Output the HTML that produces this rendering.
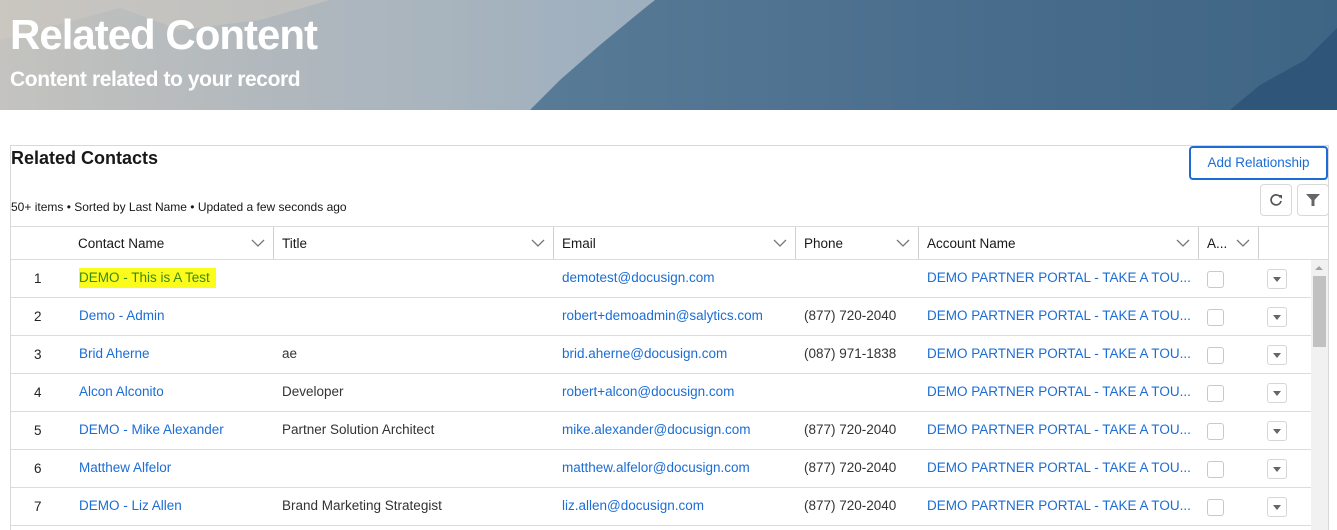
<!DOCTYPE html>
<html><head><meta charset="utf-8"><style>
*{margin:0;padding:0;box-sizing:border-box}
html,body{width:1337px;height:530px;overflow:hidden}
body{background:#fff;font-family:"Liberation Sans",Arial,sans-serif;position:relative}
.banner{position:absolute;left:0;top:0;width:1337px;height:110px;overflow:hidden}
.banner h1{position:absolute;left:10px;top:11px;color:#fff;font-size:42px;font-weight:bold;letter-spacing:-1px}
.banner h2{position:absolute;left:10px;top:68px;color:#fff;font-size:21px;font-weight:bold;letter-spacing:-0.4px}
.panel{position:absolute;left:10px;top:145px;width:1319px;height:385px;border:1px solid #d8d8d8;border-bottom:none}
.t{position:absolute;font-size:13.5px;white-space:nowrap}
.link{color:#1b6dd5}
.hd{position:absolute;top:227px;height:33px;border-left:1px solid #d0d0d0;font-size:13.5px;color:#181818}
.hd span{position:absolute;left:8px;top:9px}
.chev{position:absolute;right:8px;top:11px;width:14px;height:10px}
.row{position:absolute;left:11px;width:1300px;height:1px;background:#dcdcdc}
.cb{position:absolute;left:1207px;width:17px;height:17px;border:1px solid #c9c9c9;border-radius:3px;background:#fff}
.act{position:absolute;left:1267px;width:20px;height:20px;border:1px solid #d6d6d6;border-radius:3px;background:#fff}
.act:after{content:"";position:absolute;left:5px;top:7px;border-left:4.5px solid transparent;border-right:4.5px solid transparent;border-top:5px solid #666}
</style></head><body>
<div class="banner">
<svg width="1337" height="110" style="position:absolute;left:0;top:0">
<defs>
<linearGradient id="g1" x1="0" x2="1" y1="0" y2="0">
<stop offset="0" stop-color="#c4c3bf"/><stop offset="0.18" stop-color="#b3b9bd"/><stop offset="0.45" stop-color="#9fb0bf"/><stop offset="1" stop-color="#8ea4b6"/></linearGradient>
<linearGradient id="g2" x1="0" x2="1" y1="0" y2="0">
<stop offset="0" stop-color="#587b97"/><stop offset="0.5" stop-color="#4a6e8d"/><stop offset="1" stop-color="#3f6585"/></linearGradient>
</defs>
<rect width="1337" height="110" fill="url(#g1)"/>
<path d="M0 40 L120 8 L180 30 L260 20 L330 0 L0 0Z" fill="#cfcac2" opacity="0.5"/>
<path d="M530 110 L560 80 L600 45 L640 12 L655 0 L1337 0 L1337 110Z" fill="url(#g2)"/>
<path d="M1230 110 L1260 85 L1305 60 L1337 28 L1337 110Z" fill="#2f5679"/>
</svg>
<h1>Related Content</h1>
<h2>Content related to your record</h2>
</div>
<div class="panel"></div>
<div class="t" style="left:11px;top:148px;font-size:18px;font-weight:bold;color:#181818">Related Contacts</div>
<div style="position:absolute;left:1189px;top:146px;width:139px;height:34px;border:2px solid #1b6dd5;border-radius:4px;color:#1b6dd5;font-size:13.5px;text-align:center;line-height:30px">Add Relationship</div>
<div style="position:absolute;left:1260px;top:184px;width:32px;height:32px;border:1px solid #d8d8d8;border-radius:4px"><svg width="30" height="30"><path d="M19.5 12.5 A5 5 0 1 0 20 16" fill="none" stroke="#555" stroke-width="1.7"/><path d="M17 10 L21 10 L21 14Z" fill="#555"/></svg></div>
<div style="position:absolute;left:1297px;top:184px;width:32px;height:32px;border:1px solid #d8d8d8;border-radius:4px"><svg width="30" height="30"><path d="M8 9 L22 9 L16.5 15 L16.5 21 L13.5 21 L13.5 15Z" fill="#666"/></svg></div>
<div class="t" style="left:11px;top:200px;font-size:12px;color:#181818">50+ items • Sorted by Last Name • Updated a few seconds ago</div>
<div class="row" style="top:226px;left:11px;width:1317px"></div>
<div class="hd" style="left:70px;width:203px;border-left:none"><span>Contact Name</span><svg class="chev"><path d="M1 2 L7 8 L13 2" fill="none" stroke="#777" stroke-width="1.3"/></svg></div>
<div class="hd" style="left:273px;width:280px"><span>Title</span><svg class="chev"><path d="M1 2 L7 8 L13 2" fill="none" stroke="#777" stroke-width="1.3"/></svg></div>
<div class="hd" style="left:553px;width:242px"><span>Email</span><svg class="chev"><path d="M1 2 L7 8 L13 2" fill="none" stroke="#777" stroke-width="1.3"/></svg></div>
<div class="hd" style="left:795px;width:123px"><span>Phone</span><svg class="chev"><path d="M1 2 L7 8 L13 2" fill="none" stroke="#777" stroke-width="1.3"/></svg></div>
<div class="hd" style="left:918px;width:280px"><span>Account Name</span><svg class="chev"><path d="M1 2 L7 8 L13 2" fill="none" stroke="#777" stroke-width="1.3"/></svg></div>
<div class="hd" style="left:1198px;width:60px"><span>A...</span><svg class="chev"><path d="M1 2 L7 8 L13 2" fill="none" stroke="#777" stroke-width="1.3"/></svg></div>
<div class="hd" style="left:1258px;width:70px"></div>
<div class="row" style="top:259px;width:1317px"></div>
<div style="position:absolute;left:1311px;top:260px;width:17px;height:270px;background:#f1f1f1"></div>
<div style="position:absolute;left:1313px;top:276px;width:13px;height:71px;background:#c1c1c1"></div>
<svg style="position:absolute;left:1314px;top:265px" width="10" height="6"><path d="M1 5 L5 1 L9 5Z" fill="#a3a3a3"/></svg>
<div style="position:absolute;left:79px;top:268px;width:137px;height:20px;background:#fbfb1c"></div>

<div class="t" style="left:34px;top:271px;color:#222">1</div>
<div class="t" style="left:79px;top:270px;color:#3d8a12">DEMO - This is A Test</div>
<div class="t link" style="left:562px;top:270px">demotest@docusign.com</div>
<div class="t link" style="left:927px;top:270px">DEMO PARTNER PORTAL - TAKE A TOU...</div>
<div class="cb" style="top:271px"></div><div class="act" style="top:269px"></div>
<div class="row" style="top:297px"></div>

<div class="t" style="left:34px;top:309px;color:#222">2</div>
<div class="t link" style="left:79px;top:308px">Demo - Admin</div>
<div class="t link" style="left:562px;top:308px">robert+demoadmin@salytics.com</div>
<div class="t" style="left:804px;top:308px;color:#333">(877) 720-2040</div>
<div class="t link" style="left:927px;top:308px">DEMO PARTNER PORTAL - TAKE A TOU...</div>
<div class="cb" style="top:309px"></div><div class="act" style="top:307px"></div>
<div class="row" style="top:335px"></div>

<div class="t" style="left:34px;top:347px;color:#222">3</div>
<div class="t link" style="left:79px;top:346px">Brid Aherne</div>
<div class="t" style="left:282px;top:346px;color:#333">ae</div>
<div class="t link" style="left:562px;top:346px">brid.aherne@docusign.com</div>
<div class="t" style="left:804px;top:346px;color:#333">(087) 971-1838</div>
<div class="t link" style="left:927px;top:346px">DEMO PARTNER PORTAL - TAKE A TOU...</div>
<div class="cb" style="top:347px"></div><div class="act" style="top:345px"></div>
<div class="row" style="top:373px"></div>

<div class="t" style="left:34px;top:385px;color:#222">4</div>
<div class="t link" style="left:79px;top:384px">Alcon Alconito</div>
<div class="t" style="left:282px;top:384px;color:#333">Developer</div>
<div class="t link" style="left:562px;top:384px">robert+alcon@docusign.com</div>
<div class="t link" style="left:927px;top:384px">DEMO PARTNER PORTAL - TAKE A TOU...</div>
<div class="cb" style="top:385px"></div><div class="act" style="top:383px"></div>
<div class="row" style="top:411px"></div>

<div class="t" style="left:34px;top:423px;color:#222">5</div>
<div class="t link" style="left:79px;top:422px">DEMO - Mike Alexander</div>
<div class="t" style="left:282px;top:422px;color:#333">Partner Solution Architect</div>
<div class="t link" style="left:562px;top:422px">mike.alexander@docusign.com</div>
<div class="t" style="left:804px;top:422px;color:#333">(877) 720-2040</div>
<div class="t link" style="left:927px;top:422px">DEMO PARTNER PORTAL - TAKE A TOU...</div>
<div class="cb" style="top:423px"></div><div class="act" style="top:421px"></div>
<div class="row" style="top:449px"></div>

<div class="t" style="left:34px;top:461px;color:#222">6</div>
<div class="t link" style="left:79px;top:460px">Matthew Alfelor</div>
<div class="t link" style="left:562px;top:460px">matthew.alfelor@docusign.com</div>
<div class="t" style="left:804px;top:460px;color:#333">(877) 720-2040</div>
<div class="t link" style="left:927px;top:460px">DEMO PARTNER PORTAL - TAKE A TOU...</div>
<div class="cb" style="top:461px"></div><div class="act" style="top:459px"></div>
<div class="row" style="top:487px"></div>

<div class="t" style="left:34px;top:499px;color:#222">7</div>
<div class="t link" style="left:79px;top:498px">DEMO - Liz Allen</div>
<div class="t" style="left:282px;top:498px;color:#333">Brand Marketing Strategist</div>
<div class="t link" style="left:562px;top:498px">liz.allen@docusign.com</div>
<div class="t" style="left:804px;top:498px;color:#333">(877) 720-2040</div>
<div class="t link" style="left:927px;top:498px">DEMO PARTNER PORTAL - TAKE A TOU...</div>
<div class="cb" style="top:499px"></div><div class="act" style="top:497px"></div>
<div class="row" style="top:525px"></div>
</body></html>
